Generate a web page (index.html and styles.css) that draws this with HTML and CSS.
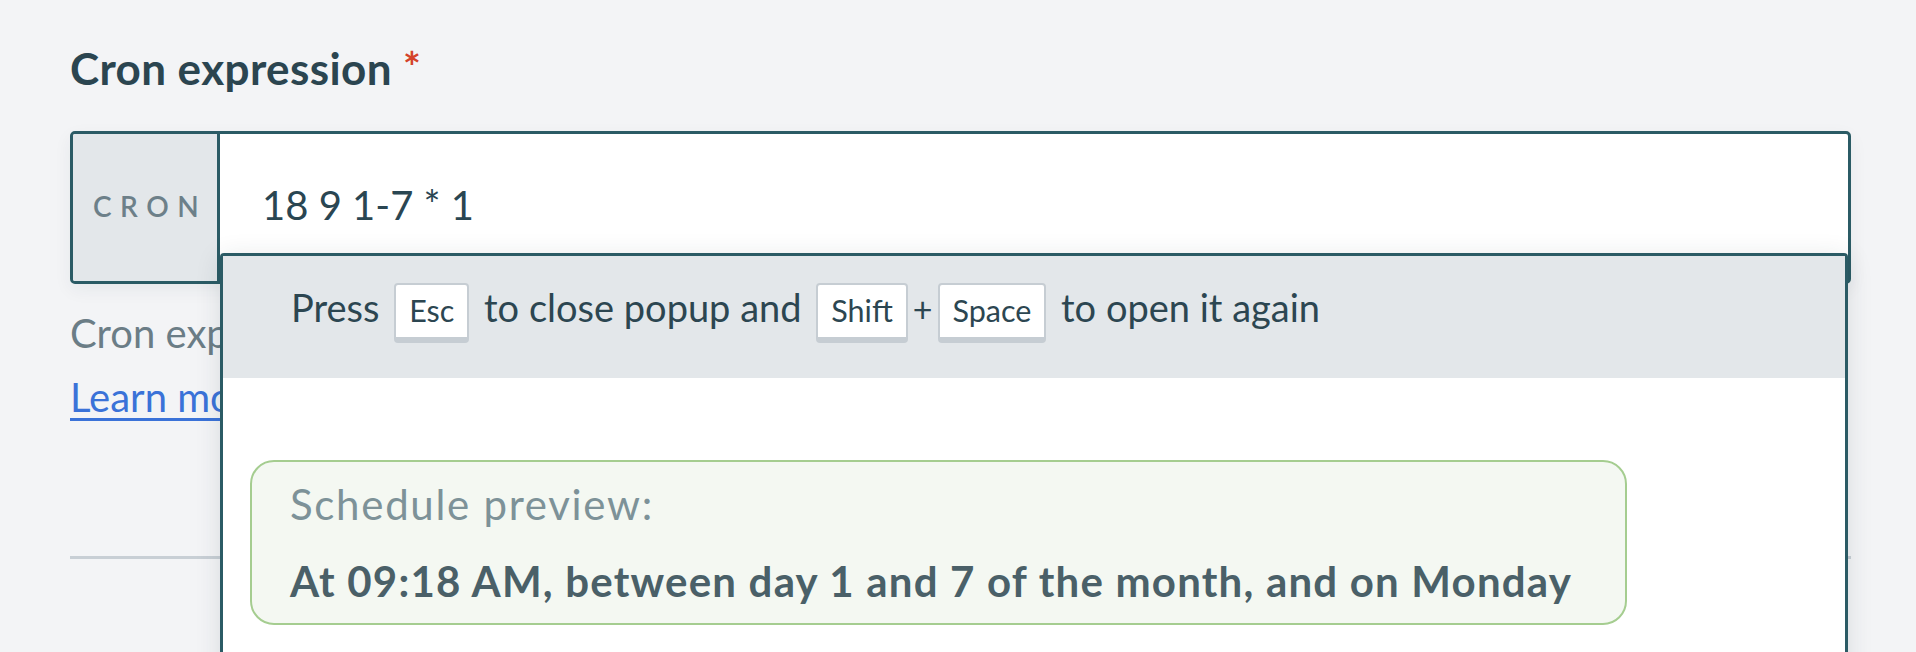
FILE: index.html
```html
<!DOCTYPE html>
<html lang="en">
<head>
<meta charset="utf-8">
<title>Cron expression</title>
<link rel="stylesheet" href="styles.css">
</head>
<body>
<div class="page">
  <div class="field-label">Cron expression<span class="required">*</span></div>

  <div class="field">
    <div class="input-group">
      <div class="addon">CRON</div>
      <div class="input-value">18 9 1-7 * 1</div>
    </div>

    <div class="popup">
      <div class="popup-hint">
        Press <kbd class="key">Esc</kbd> to close popup and <kbd class="key">Shift</kbd><span class="plus">+</span><kbd class="key">Space</kbd> to open it again
      </div>
      <div class="popup-body">
        <div class="preview">
          <div class="preview-title">Schedule preview:</div>
          <div class="preview-text">At 09:18 AM, between day 1 and 7 of the month, and on Monday</div>
        </div>
      </div>
    </div>
  </div>

  <div class="help">
    <div class="help-line">Cron expression.</div>
    <div class="help-line"><a class="help-link" href="#">Learn more</a></div>
  </div>

  <hr class="divider">
</div>
</body>
</html>
```
FILE: styles.css
```css
html, body {
  margin: 0;
  padding: 0;
  overflow: hidden;
  height: 100%;
}

body {
  background: #f3f4f6;
  font-family: "Lato", "Liberation Sans", sans-serif;
  color: #2c4651;
}

.page {
  padding: 42px 65px 0 70px;
}

.field-label {
  font-weight: 700;
  font-size: 44px;
  line-height: 53px;
  letter-spacing: 0.4px;
  color: #2b4550;
}

.required {
  position: relative;
  top: -2px;
  color: #d4432a;
  margin-left: 11px;
  font-size: 42px;
}

.field {
  position: relative;
  margin-top: 35px;
}

.input-group {
  display: flex;
  height: 153px;
  box-sizing: border-box;
  border: 3px solid #2b5b65;
  border-radius: 5px;
  background: #fff;
  overflow: hidden;
  box-shadow: 0 6px 18px rgba(30, 50, 60, 0.06);
}

.addon {
  width: 147px;
  flex: none;
  box-sizing: border-box;
  background: #e3e7ea;
  border-right: 3px solid #2b5b65;
  display: flex;
  align-items: center;
  padding-left: 20px;
  font-size: 28px;
  font-weight: 600;
  letter-spacing: 8.5px;
  color: #6d8089;
  padding-bottom: 3px;
}

.input-value {
  flex: 1;
  display: flex;
  align-items: center;
  padding-left: 42px;
  padding-bottom: 5px;
  font-size: 40px;
  color: #2a4652;
}

.popup {
  position: absolute;
  top: 122px;
  left: 150px;
  right: 3px;
  height: 460px;
  box-sizing: border-box;
  border: 3px solid #2b5b65;
  border-bottom: none;
  border-radius: 4px 4px 0 0;
  background: #fff;
  box-shadow: 0 4px 26px rgba(30, 50, 60, 0.12);
}

.popup-hint {
  height: 122px;
  box-sizing: border-box;
  background: #e3e7ea;
  padding: 21px 0 0 68px;
  font-size: 38px;
  line-height: 60px;
  color: #2c4651;
  white-space: nowrap;
}

.key {
  display: inline-block;
  font-family: "Lato", "Liberation Sans", sans-serif;
  font-size: 30.5px;
  line-height: 36px;
  padding: 7px 13px 9px;
  margin: 0 5px;
  background: #fff;
  border: 2px solid #c6cdd3;
  border-bottom-width: 6px;
  border-radius: 4px;
  color: #2c4651;
}

.plus {
  font-size: 34px;
}

.popup-body {
  padding: 82px 0 0 27px;
}

.preview {
  width: 1377px;
  box-sizing: border-box;
  border: 2px solid #a5cd90;
  border-radius: 24px;
  background: #f4f8f2;
  padding: 17px 0 17px 38px;
}

.preview-title {
  font-size: 42px;
  line-height: 50px;
  letter-spacing: 1.7px;
  color: #7d9298;
}

.preview-text {
  margin-top: 27px;
  font-size: 42px;
  line-height: 50px;
  font-weight: 700;
  letter-spacing: 1.2px;
  color: #4a6068;
}

.help {
  margin-top: 17px;
  font-size: 40px;
  line-height: 64px;
  color: #6b7d86;
}

.help-line {
  white-space: nowrap;
}

.help-link {
  color: #3a72d8;
  text-decoration: underline;
  text-decoration-thickness: 3px;
  text-underline-offset: 6px;
}

.divider {
  margin: 127px 0 0;
  border: none;
  border-top: 3px solid #c8cfd5;
}
```
